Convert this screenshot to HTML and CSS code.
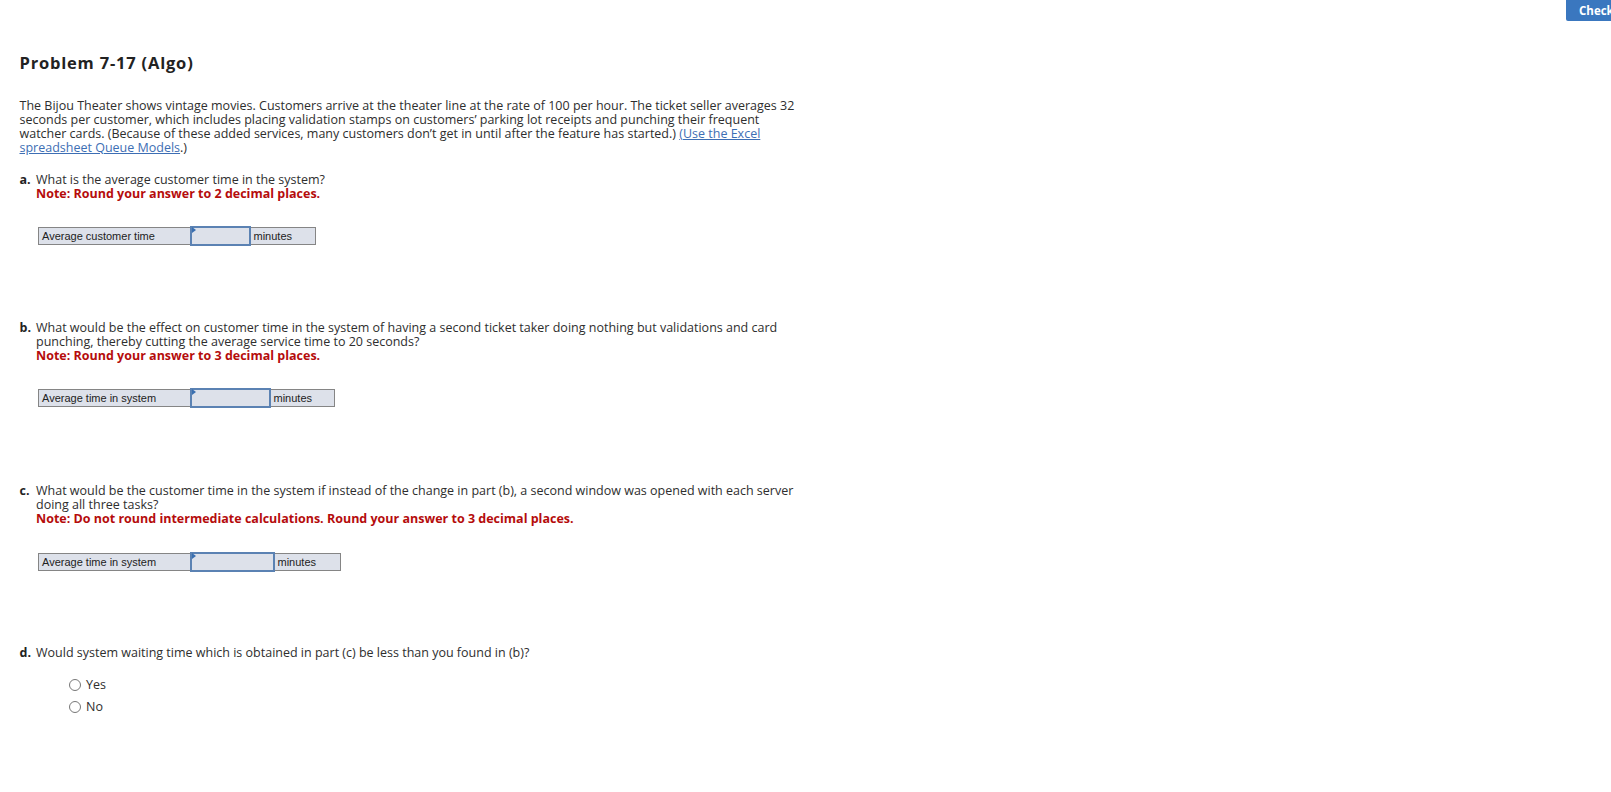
FILE: index.html
```html
<!DOCTYPE html>
<html>
<head>
<meta charset="utf-8">
<link rel="stylesheet" href="styles.css">
</head>
<body>
<div class="topbar"><button class="check">Check</button></div>
<main class="page">
  <h1 class="title">Problem 7-17 (Algo)</h1>
  <p class="intro">The Bijou Theater shows vintage movies. Customers arrive at the theater line at the rate of 100 per hour. The ticket seller averages 32 seconds per customer, which includes placing validation stamps on customers’ parking lot receipts and punching their frequent watcher cards. (Because of these added services, many customers don’t get in until after the feature has started.) <a href="#">(Use the Excel spreadsheet Queue Models</a>.)</p>

  <section class="part part-a">
    <div class="q"><span class="letter">a.</span><div class="qbody">What is the average customer time in the system?<div class="note">Note: Round your answer to 2 decimal places.</div></div></div>
    <table class="answer">
      <tr><td class="lbl">Average customer time</td><td class="inp w-a"><span class="flag"></span></td><td class="unit u-a">minutes</td></tr>
    </table>
  </section>

  <section class="part part-b">
    <div class="q"><span class="letter">b.</span><div class="qbody">What would be the effect on customer time in the system of having a second ticket taker doing nothing but validations and card punching, thereby cutting the average service time to 20 seconds?<div class="note">Note: Round your answer to 3 decimal places.</div></div></div>
    <table class="answer">
      <tr><td class="lbl">Average time in system</td><td class="inp w-b"><span class="flag"></span></td><td class="unit u-b">minutes</td></tr>
    </table>
  </section>

  <section class="part part-c">
    <div class="q"><span class="letter">c.</span><div class="qbody">What would be the customer time in the system if instead of the change in part (b), a second window was opened with each server doing all three tasks?<div class="note">Note: Do not round intermediate calculations. Round your answer to 3 decimal places.</div></div></div>
    <table class="answer">
      <tr><td class="lbl">Average time in system</td><td class="inp w-c"><span class="flag"></span></td><td class="unit u-c">minutes</td></tr>
    </table>
  </section>

  <section class="part part-d">
    <div class="q"><span class="letter">d.</span><div class="qbody">Would system waiting time which is obtained in part (c) be less than you found in (b)?</div></div>
    <div class="choices">
      <label class="choice"><span class="radio"></span>Yes</label>
      <label class="choice"><span class="radio"></span>No</label>
    </div>
  </section>
</main>
</body>
</html>
```

FILE: styles.css
```css
html, body {
  margin: 0;
  padding: 0;
  background: #fff;
  overflow: hidden;
}
body {
  font-family: "Open Sans", Lato, "Liberation Sans", sans-serif;
  color: #2e2e2e;
  font-size: 12.5px;
}
.topbar {
  display: flex;
  justify-content: flex-end;
  height: 21px;
  overflow: hidden;
}
.check {
  flex: none;
  width: 60px;
  height: 21px;
  margin-right: -15px;
  border: none;
  border-radius: 0 0 0 2px;
  background: #3a77bf;
  color: #fff;
  font-family: "Open Sans", "Liberation Sans", sans-serif;
  font-weight: 700;
  font-size: 11.5px;
  padding: 0 0 1px 13px;
  text-align: left;
  white-space: nowrap;
}
.page {
  padding-left: 19.5px;
}
.title {
  margin: 31.5px 0 0 0;
  font-size: 16.5px;
  font-weight: 700;
  letter-spacing: 0.8px;
  color: #222;
  line-height: 20px;
}
.intro {
  width: 780px;
  margin: 26px 0 0 0;
  line-height: 14px;
}
.intro a {
  color: #3d6eb4;
  text-decoration: underline;
}
.q {
  display: flex;
  line-height: 14px;
}
.letter {
  width: 16.5px;
  flex: none;
  font-weight: 700;
  color: #222;
}
.qbody {
  width: 770px;
}
.note {
  color: #b50c0c;
  font-weight: 700;
}
.part-a { margin-top: 18px; }
.part-b { margin-top: 75px; }
.part-c { margin-top: 76px; }
.part-d { margin-top: 74px; }

.answer {
  border-collapse: collapse;
  margin: 25.5px 0 0 18.5px;
  font-family: "Liberation Sans", Arial, sans-serif;
  font-size: 11px;
  color: #222;
}
.part-c .answer { margin-top: 26.5px; }
.answer td {
  height: 17.5px;
  padding: 0 0 0 3px;
  background: #dde1ea;
  border: 1px solid #858585;
  box-sizing: border-box;
}
.answer .lbl { width: 152px; }
.answer .inp {
  position: relative;
  border: 2px solid #5b82b3;
  padding: 0;
}
.w-a { width: 59px; }
.w-b { width: 79px; }
.w-c { width: 83px; }
.u-a { width: 66px; }
.u-b { width: 65px; }
.u-c { width: 67px; }
.flag {
  position: absolute;
  left: 0;
  top: -1px;
  width: 0;
  height: 0;
  border-top: 3px solid transparent;
  border-bottom: 3px solid transparent;
  border-left: 4px solid #3a6fb0;
}
.choices {
  margin: 18px 0 0 49.5px;
  display: flex;
  flex-direction: column;
  gap: 8.7px;
}
.choice {
  display: flex;
  align-items: center;
  gap: 5px;
  line-height: 14px;
}
.radio {
  width: 10px;
  height: 10px;
  border: 1px solid #777;
  border-radius: 50%;
  background: #fff;
}
```
